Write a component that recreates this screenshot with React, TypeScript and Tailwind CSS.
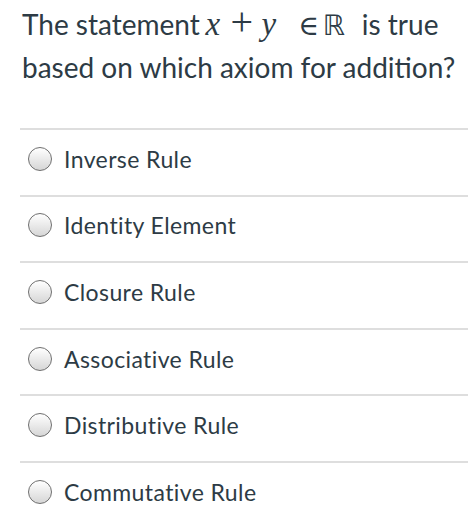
const options = [
  "Inverse Rule",
  "Identity Element",
  "Closure Rule",
  "Associative Rule",
  "Distributive Rule",
  "Commutative Rule",
];

export default function App() {
  return (
    <div className="w-[474px] h-[524px] bg-white overflow-hidden font-['Lato',sans-serif] text-[#2d3b45]">
      <h1 className="pt-[1.5px] pl-[22px] pr-[4px] text-[28px] leading-[43px] font-normal">
        The statement
        <span className="inline-block w-[26px] text-center leading-none font-['Liberation_Serif',serif] italic text-[33px]">x</span>
        <span className="inline-block w-[32px] text-center leading-none font-['Liberation_Serif',serif] text-[40px]">+</span>
        <span className="inline-block w-[22px] text-center leading-none font-['Liberation_Serif',serif] italic text-[33px]">y</span>
        <span className="inline-block ml-[18.5px] w-[18px] text-center leading-none font-['DejaVu_Serif',serif] text-[28px]">∈</span>
        <span className="inline-block ml-[6.5px] mr-[19px] w-[20px] text-center leading-none font-['DejaVu_Sans',sans-serif] text-[28px]">ℝ</span>
        is true based on which axiom for addition?
      </h1>

      <div className="mt-[39.5px] ml-[20px] w-[448px]">
        {options.map((label) => (
          <div key={label} className="h-[66.6px] border-t-2 border-[#dedede] flex items-center pb-[7px]">
            <span className="ml-[8px] w-[24px] h-[24px] rounded-full border-[1.5px] border-[#6f6f6f] bg-gradient-to-b from-white to-[#d6d6d6] shrink-0" />
            <span className="ml-[12px] text-[23px] leading-[28px] tracking-[0.4px]">{label}</span>
          </div>
        ))}
      </div>
    </div>
  );
}
